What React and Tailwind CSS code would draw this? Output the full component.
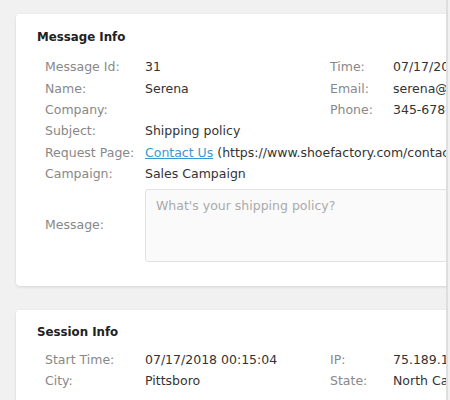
import React from 'react';

const font = { fontFamily: '"DejaVu Sans", Verdana, sans-serif' };

function Row({ label, value, label2, value2 }) {
    return (
        <div className="flex h-[21.4px] items-center whitespace-nowrap">
            <div className="w-[100px] shrink-0 text-[#888888]">{label}</div>
            <div className="w-[185px] shrink-0 text-[#333333]">{value}</div>
            {label2 && <div className="w-[63px] shrink-0 text-[#888888]">{label2}</div>}
            {value2 && <div className="shrink-0 text-[#333333]">{value2}</div>}
        </div>
    );
}

function WideRow({ label, children }) {
    return (
        <div className="flex h-[21.4px] items-center whitespace-nowrap">
            <div className="w-[100px] shrink-0 text-[#888888]">{label}</div>
            <div className="shrink-0 text-[#333333]">{children}</div>
        </div>
    );
}

export default function App() {
    return (
        <div className="w-[450px] h-[400px] overflow-hidden bg-[#f1f1f1]" style={font}>
            <div className="w-[448px] h-[400px] overflow-hidden border-r-2 border-[#dedede] pl-4 pt-[14px] text-[12.5px]">
                <div className="w-[640px] rounded bg-white pl-[21px] pt-[13px] pb-[24px] shadow-[0_1px_3px_rgba(0,0,0,0.12)]">
                    <h2 className="h-[20px] text-[11.8px] font-bold leading-[20px] text-[#222222]">Message Info</h2>
                    <div className="mt-[10px] pl-2">
                        <Row label="Message Id:" value="31" label2="Time:" value2="07/17/2018 00:15:04" />
                        <Row label="Name:" value="Serena" label2="Email:" value2="serena@gmail.com" />
                        <Row label="Company:" value="" label2="Phone:" value2="345-678-9012" />
                        <Row label="Subject:" value="Shipping policy" />
                        <WideRow label="Request Page:">
                            <a href="#" className="text-[#3a97d4] underline">Contact Us</a> (https://www.shoefactory.com/contact-us)
                        </WideRow>
                        <WideRow label="Campaign:">Sales Campaign</WideRow>
                        <div className="mt-[4px] flex items-center">
                            <div className="w-[100px] shrink-0 text-[#888888]">Message:</div>
                            <div className="h-[73px] w-[500px] rounded-[3px] border border-[#e2e2e2] bg-[#fafafa] px-[10px] pt-[7px] text-[#aaaaaa]">
                                What's your shipping policy?
                            </div>
                        </div>
                    </div>
                </div>
                <div className="mt-[24px] w-[640px] rounded bg-white pl-[21px] pt-[12px] pb-[40px] shadow-[0_1px_3px_rgba(0,0,0,0.12)]">
                    <h2 className="h-[20px] text-[11.8px] font-bold leading-[20px] text-[#222222]">Session Info</h2>
                    <div className="mt-[7px] pl-2">
                        <Row label="Start Time:" value="07/17/2018 00:15:04" label2="IP:" value2="75.189.112.40" />
                        <Row label="City:" value="Pittsboro" label2="State:" value2="North Carolina" />
                    </div>
                </div>
            </div>
        </div>
    );
}
